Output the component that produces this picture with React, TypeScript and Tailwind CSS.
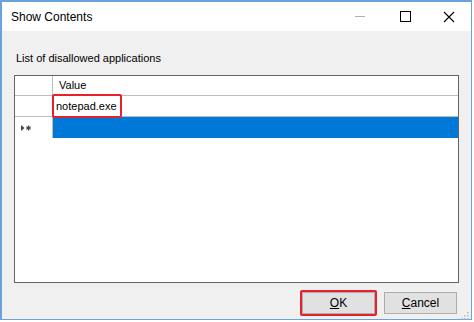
import React from 'react';

export default function App() {
    return (
        <div className="w-[474px] h-[322px] bg-white" style={{ fontFamily: '"Liberation Sans", Arial, sans-serif' }}>
            <div className="w-[472px] h-[320px] border border-[#6aa3dc] border-t-2 border-l-2 flex flex-col bg-[#f0f0f0] text-[11px] text-black">
                {/* title bar */}
                <div className="h-[29px] bg-white flex items-center shrink-0">
                    <span className="pl-[9px] text-[12px] leading-none">Show Contents</span>
                    <div className="ml-auto flex items-center h-full">
                        <div className="w-[46px] h-full flex items-center justify-center">
                            <div className="w-[10px] h-px bg-[#b0b0b0]" />
                        </div>
                        <div className="w-[44px] h-full flex items-center justify-center">
                            <div className="w-[11px] h-[11px] border border-black" />
                        </div>
                        <div className="w-[44px] h-full flex items-center justify-center">
                            <svg width="12" height="12" viewBox="0 0 12 12">
                                <path d="M1 1 L11 11 M11 1 L1 11" stroke="#000" strokeWidth="1.1" />
                            </svg>
                        </div>
                    </div>
                </div>

                {/* body */}
                <div className="flex-1 flex flex-col px-[12px]">
                    <div className="pt-[20px] pb-[10px] pl-[2px] leading-[14px]">List of disallowed applications</div>

                    <div className="h-[208px] bg-white border border-[#646464] flex flex-col">
                        {/* header */}
                        <div className="flex h-[20px] border-b border-[#bdbdbd]">
                            <div className="w-[38px] border-r border-[#bdbdbd]" />
                            <div className="flex-1 pl-[6px] flex items-center leading-none">Value</div>
                        </div>
                        {/* row 1 */}
                        <div className="flex h-[21px] border-b border-[#bdbdbd]">
                            <div className="w-[38px] border-r border-[#bdbdbd]" />
                            <div className="flex-1 relative flex items-center pl-[3px] leading-none">
                                notepad.exe
                                <div className="absolute left-[-1px] top-[-2px] w-[70px] h-[24px] border-2 border-[#e8202a] rounded-[2px]" />
                            </div>
                        </div>
                        {/* new row */}
                        <div className="flex h-[21px]">
                            <div className="w-[38px] border-r border-[#bdbdbd] flex items-center pl-[5px]">
                                <svg width="14" height="8" viewBox="0 0 14 8">
                                    <path d="M1 1 L4.5 4 L1 7 Z" fill="#444" />
                                    <path d="M8.5 1.5 v5 M6.3 2.8 l4.4 2.4 M10.7 2.8 l-4.4 2.4" stroke="#444" strokeWidth="1.2" />
                                </svg>
                            </div>
                            <div className="flex-1 bg-[#0078d7]" />
                        </div>
                    </div>

                    {/* buttons */}
                    <div className="relative flex justify-end gap-[9px] pt-[9px] pr-[2px]">
                        <div className="relative w-[73px] h-[22px] bg-[#e1e1e1] border border-[#adadad] flex items-center justify-center leading-none text-[12px]">
                            <span><span className="underline">O</span>K</span>
                            <div className="absolute left-[-3px] top-[-3px] w-[77px] h-[26px] border-2 border-[#e8202a] rounded-[2px]" />
                        </div>
                        <div className="w-[73px] h-[22px] bg-[#e1e1e1] border border-[#adadad] flex items-center justify-center leading-none text-[12px]">
                            <span><span className="underline">C</span>ancel</span>
                        </div>
                        <svg className="absolute right-[-10px] bottom-[-6px]" width="8" height="8" viewBox="0 0 8 8">
                            <rect x="6" y="0" width="1.5" height="1.5" fill="#bbb" />
                            <rect x="3" y="3" width="1.5" height="1.5" fill="#bbb" />
                            <rect x="6" y="3" width="1.5" height="1.5" fill="#bbb" />
                            <rect x="0" y="6" width="1.5" height="1.5" fill="#bbb" />
                            <rect x="3" y="6" width="1.5" height="1.5" fill="#bbb" />
                            <rect x="6" y="6" width="1.5" height="1.5" fill="#bbb" />
                        </svg>
                    </div>
                </div>
            </div>
        </div>
    );
}
